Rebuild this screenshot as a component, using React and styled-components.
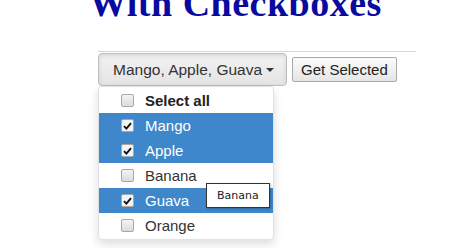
import styled, { createGlobalStyle } from "styled-components";

const GlobalStyle = createGlobalStyle`
  html, body {
    margin: 0;
    padding: 0;
    background: #fff;
    overflow: hidden;
  }
  body {
    font-family: "Liberation Sans", Arial, sans-serif;
  }
`;

const fruits = [
  { name: "Mango", checked: true },
  { name: "Apple", checked: true },
  { name: "Banana", checked: false },
  { name: "Guava", checked: true },
  { name: "Orange", checked: false },
];

export default function App() {
  const selected = fruits.filter((f) => f.checked).map((f) => f.name);

  return (
    <Page>
      <GlobalStyle />
      <Title>With Checkboxes</Title>
      <Toolbar>
        <Dropdown>
          <ToggleButton>
            {selected.join(", ")} <Caret />
          </ToggleButton>
          <Menu>
            <Item>
              <Box />
              <strong>Select all</strong>
            </Item>
            {fruits.map(({ name, checked }) => (
              <Item key={name} $active={checked}>
                <Box $checked={checked}>{checked && <Tick />}</Box>
                {name}
              </Item>
            ))}
          </Menu>
          <Tooltip>Banana</Tooltip>
        </Dropdown>
        <PlainButton>Get Selected</PlainButton>
      </Toolbar>
    </Page>
  );
}

function Tick() {
  return (
    <svg width="9" height="8" viewBox="0 0 9 8">
      <path
        d="M1 4.2 L3.4 6.6 L8 1.2"
        fill="none"
        stroke="#111"
        strokeWidth="1.9"
      />
    </svg>
  );
}

const Page = styled.div`
  width: 474px;
  height: 248px;
  overflow: hidden;
`;

const Title = styled.h1`
  margin: -16px 0 0 0;
  padding-left: 89px;
  font-family: "Liberation Serif", "DejaVu Serif", serif;
  font-weight: bold;
  font-size: 38px;
  line-height: 38px;
  color: #0a0aa0;
  letter-spacing: 0.5px;
`;

const Toolbar = styled.div`
  margin: 29px 0 0 98px;
  width: 318px;
  border-top: 1px solid #d6d6d6;
  padding-top: 1px;
  display: flex;
  align-items: flex-start;
  gap: 5px;
`;

const Dropdown = styled.div`
  position: relative;
`;

const ToggleButton = styled.button`
  display: flex;
  align-items: center;
  gap: 4px;
  height: 33px;
  padding: 0 12px 0 14px;
  font-family: "Liberation Sans", Arial, sans-serif;
  font-size: 15.5px;
  color: #333;
  background: linear-gradient(#f2f2f2, #e4e4e4);
  border: 1px solid #bdbdbd;
  border-radius: 4px;
  box-shadow: inset 0 2px 4px rgba(0, 0, 0, 0.1);
`;

const Caret = styled.span`
  display: inline-block;
  width: 0;
  height: 0;
  border-top: 4px solid #333;
  border-left: 4px solid transparent;
  border-right: 4px solid transparent;
`;

const Menu = styled.ul`
  position: absolute;
  top: 33px;
  left: 0;
  width: 174px;
  margin: 0;
  padding: 1px 0;
  list-style: none;
  background: #fff;
  border: 1px solid #e2e2e2;
  border-radius: 4px;
  box-shadow: 0 4px 10px rgba(0, 0, 0, 0.14);
`;

const Item = styled.li`
  display: flex;
  align-items: center;
  gap: 11px;
  height: 25px;
  padding-left: 22px;
  font-size: 15px;
  color: ${(p) => (p.$active ? "#fff" : "#333")};
  background: ${(p) => (p.$active ? "#3f87cb" : "transparent")};

  strong {
    color: #222;
  }
`;

const Box = styled.span`
  display: inline-flex;
  align-items: center;
  justify-content: center;
  width: 11px;
  height: 11px;
  border: 1px solid #a8a8a8;
  border-radius: 2px;
  background: ${(p) =>
    p.$checked ? "#f4f4f4" : "linear-gradient(#f4f4f4, #dcdcdc)"};
`;

const Tooltip = styled.div`
  position: absolute;
  top: 130px;
  left: 108px;
  padding: 5px 10px;
  font-family: "DejaVu Sans", Tahoma, sans-serif;
  font-size: 11px;
  color: #222;
  background: #fff;
  border: 1px solid #333;
  box-shadow: 1px 1px 2px rgba(0, 0, 0, 0.25);
`;

const PlainButton = styled.button`
  margin-top: 4px;
  height: 25px;
  padding: 0 8px;
  font-family: "Liberation Sans", Arial, sans-serif;
  font-size: 15px;
  color: #222;
  background: linear-gradient(#fbfbfb, #e5e5e5);
  border: 1px solid #a9a9a9;
  border-radius: 2px;
`;
